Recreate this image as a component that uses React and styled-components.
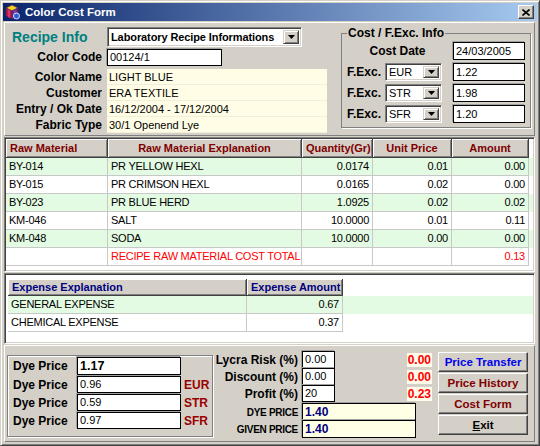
import React from 'react';
import styled, { createGlobalStyle } from 'styled-components';

const GlobalStyle = createGlobalStyle`
  html, body {
    margin: 0;
    padding: 0;
    background: #d4d0c8;
  }
  body {
    font-family: "Liberation Sans", Arial, sans-serif;
    font-size: 11px;
    color: #000;
  }
  * {
    box-sizing: border-box;
  }
`;

const Window = styled.div`
  width: 540px;
  height: 446px;
  background: #d4d0c8;
  border: 1px solid;
  border-color: #d4d0c8 #404040 #404040 #d4d0c8;
  box-shadow: inset 1px 1px #fff, inset -1px -1px #808080;
  padding: 2px;
  display: flex;
  flex-direction: column;
`;

const TitleBar = styled.div`
  height: 18px;
  flex: none;
  display: flex;
  align-items: center;
  padding: 0 3px 0 2px;
  background: linear-gradient(to right, #0a246a, #a6caf0);
`;

const TitleText = styled.span`
  flex: 1;
  margin-left: 4px;
  color: #fff;
  font-weight: bold;
  font-size: 11.5px;
`;

const CloseButton = styled.div`
  width: 16px;
  height: 14px;
  background: #d4d0c8;
  border: 1px solid;
  border-color: #fff #404040 #404040 #fff;
  box-shadow: inset -1px -1px #808080;
  display: flex;
  align-items: center;
  justify-content: center;
`;

const Body = styled.div`
  flex: 1;
  display: flex;
  flex-direction: column;
  gap: 1px;
  padding: 1px 2px 0 1px;
`;

const Panel = styled.div`
  flex: none;
  height: ${p => p.$h}px;
  background: ${p => (p.$white ? '#fff' : '#d4d0c8')};
  border: 1px solid;
  border-color: ${p => (p.$sunken ? '#808080 #fff #fff #808080' : '#fff #808080 #808080 #fff')};
  box-shadow: ${p => (p.$sunken ? 'inset 1px 1px #404040, inset -1px -1px #d4d0c8' : 'none')};
`;

const TopPanel = styled(Panel)`
  display: flex;
  align-items: flex-start;
  padding: 4px 3px 0 2px;
`;

const GridPanel = styled(Panel)`
  padding: 1px;
  overflow: hidden;
`;

const ExpensePanel = styled(Panel)`
  padding: 5px 1px 1px 3px;
`;

const BottomPanel = styled(Panel)`
  display: flex;
  align-items: flex-start;
  padding: 0 6px 0 2px;
`;

/* ---------- recipe info ---------- */

const RecipeGrid = styled.div`
  display: grid;
  grid-template-columns: 95px 220px;
  grid-template-rows: 22px 20px repeat(4, 16px);
  column-gap: 5px;
  align-items: center;
`;

const SectionTitle = styled.div`
  align-self: start;
  padding-left: 5px;
  line-height: 20px;
  font-size: 14px;
  font-weight: bold;
  color: #008080;
`;

const FieldLabel = styled.div`
  text-align: right;
  font-size: 12px;
  font-weight: bold;
  white-space: nowrap;
  align-self: ${p => (p.$top ? 'start' : 'center')};
  line-height: ${p => (p.$top ? '17px' : 'normal')};
`;

const InfoField = styled.div`
  height: 16px;
  background: #fffde6;
  border-bottom: 1px solid #f1efdc;
  padding-left: 2px;
  line-height: 16px;
  font-size: 11px;
  white-space: nowrap;
`;

const Combo = styled.div`
  width: ${p => p.$w}px;
  height: ${p => p.$h || 18}px;
  align-self: start;
  background: #fff;
  border: 1px solid;
  border-color: #808080 #fff #fff #808080;
  box-shadow: inset 1px 1px #404040, inset -1px -1px #d4d0c8;
  padding: 2px;
  display: flex;
  align-items: center;
`;

const ComboText = styled.span`
  flex: 1;
  padding-left: 1px;
  font-size: ${p => p.$size || 11}px;
  font-weight: ${p => (p.$bold ? 'bold' : 'normal')};
  letter-spacing: ${p => (p.$bold ? '-0.1px' : 'normal')};
  white-space: nowrap;
  overflow: hidden;
`;

const ComboArrow = styled.div`
  width: 16px;
  flex: none;
  align-self: stretch;
  background: #d4d0c8;
  border: 1px solid;
  border-color: #d4d0c8 #404040 #404040 #d4d0c8;
  box-shadow: inset 1px 1px #fff, inset -1px -1px #808080;
  display: flex;
  align-items: center;
  justify-content: center;
`;

const TextBox = styled.div`
  width: ${p => p.$w}px;
  height: ${p => p.$h || 18}px;
  align-self: start;
  justify-self: ${p => (p.$end ? 'end' : 'start')};
  margin-top: ${p => p.$mt || 0}px;
  background: ${p => p.$bg || '#fff'};
  border: 1px solid #000;
  box-shadow: -1px -1px 0 #a0a0a0;
  padding-left: 2px;
  line-height: ${p => (p.$h || 18) - 2}px;
  font-size: ${p => p.$size || 11}px;
  font-weight: ${p => (p.$bold ? 'bold' : 'normal')};
  color: ${p => p.$color || '#000'};
  white-space: nowrap;
`;

/* ---------- exchange group ---------- */

const GroupBox = styled.fieldset`
  margin: 0 0 0 auto;
  width: 190px;
  height: 101px;
  min-width: 0;
  padding: 0 5px;
  border: 1px solid #808080;
  box-shadow: 1px 1px 0 #fff;
`;

const GroupLegend = styled.legend`
  padding: 0 1px;
  font-size: 12px;
  font-weight: bold;
  line-height: 12px;
`;

const ExcGrid = styled.div`
  display: grid;
  grid-template-columns: 38px 57px 1fr;
  grid-auto-rows: 18px;
  row-gap: 3px;
  align-items: center;
  margin-top: 3px;
`;

const ExcLabel = styled.div`
  grid-column: ${p => p.$span || 'auto'};
  text-align: ${p => (p.$center ? 'center' : 'left')};
  font-size: 12px;
  font-weight: bold;
  white-space: nowrap;
  padding-left: ${p => (p.$center ? '6px' : '0')};
`;

/* ---------- grids ---------- */

const GridRow = styled.div`
  display: grid;
  grid-template-columns: ${p => p.$cols};
  height: ${p => p.$h || 18}px;
  background: ${p => p.$bg || '#fff'};
`;

const HeadCell = styled.div`
  background: #d4d0c8;
  border-right: 1px solid #404040;
  border-bottom: 1px solid #404040;
  box-shadow: inset 1px 1px #fff, inset -1px -1px #808080;
  color: ${p => p.$color};
  font-size: 11px;
  font-weight: bold;
  text-align: ${p => p.$align || 'center'};
  padding: 0 4px;
  line-height: ${p => p.$lh || 17}px;
  white-space: nowrap;
  overflow: hidden;
`;

const Cell = styled.div`
  border-right: 1px solid #c8c8c8;
  border-bottom: 1px solid #c8c8c8;
  padding: 0 3px;
  line-height: 17px;
  letter-spacing: -0.25px;
  text-align: ${p => p.$align || 'left'};
  color: ${p => p.$color || '#000'};
  white-space: nowrap;
  overflow: hidden;
`;

/* ---------- bottom ---------- */

const PriceGroup = styled.div`
  width: 206px;
  height: 82px;
  margin-top: 9px;
  border: 1px solid #808080;
  box-shadow: inset 1px 1px #fff, 1px 1px 0 #fff;
  padding: 1px 0 0 5px;
  display: grid;
  grid-template-columns: 64px 104px auto;
  grid-template-rows: 18px 17px 17px 17px;
  row-gap: 1px;
  align-items: center;
`;

const PriceLabel = styled.div`
  font-size: 12px;
  font-weight: bold;
  white-space: nowrap;
`;

const Currency = styled.div`
  margin-left: 3px;
  color: #990000;
  font-size: 12px;
  font-weight: bold;
`;

const MiddleBlock = styled.div`
  width: 221px;
  margin: 5px 0 0 2px;
`;

const RateGrid = styled.div`
  display: grid;
  grid-template-columns: 83px 33px 1fr;
  grid-auto-rows: 17px;
  column-gap: 4px;
  align-items: center;
`;

const RedValue = styled.div`
  justify-self: end;
  margin-right: 4px;
  padding: 0 1px;
  background: #fffbea;
  color: #ff0000;
  font-size: 12px;
  font-weight: bold;
  line-height: 14px;
`;

const TotalsGrid = styled.div`
  display: grid;
  grid-template-columns: 83px 114px;
  grid-template-rows: 18px 17px;
  column-gap: 4px;
  align-items: center;
  margin-top: 1px;
`;

const SmallCaps = styled.div`
  text-align: right;
  font-size: 10px;
  font-weight: bold;
  letter-spacing: -0.3px;
  white-space: nowrap;
`;

const ButtonColumn = styled.div`
  display: flex;
  flex-direction: column;
  gap: 1px;
  margin: 6px 0 0 2px;
`;

const ActionButton = styled.button`
  width: 90px;
  height: 20px;
  padding: 0;
  background: #d4d0c8;
  border: 1px solid;
  border-color: #fff #404040 #404040 #fff;
  box-shadow: inset -1px -1px #808080;
  font-family: "Liberation Sans", Arial, sans-serif;
  font-size: 11.5px;
  font-weight: bold;
  color: ${p => p.$color || '#000'};
`;

/* ---------- icons ---------- */

const AppIcon = () => (
  <svg width="16" height="16" viewBox="0 0 16 16">
    <polygon points="1,4 7,1 13,4 7,7" fill="#f2d21a" stroke="#502060" strokeWidth="0.6" />
    <polygon points="1,4 7,7 7,15 1,12" fill="#c01848" stroke="#502060" strokeWidth="0.6" />
    <polygon points="7,7 13,4 13,12 7,15" fill="#6a2c90" stroke="#502060" strokeWidth="0.6" />
    <line x1="4" y1="5.5" x2="4" y2="13.5" stroke="#f090b0" strokeWidth="0.6" />
    <line x1="10" y1="5.5" x2="10" y2="13.5" stroke="#a070c0" strokeWidth="0.6" />
    <circle cx="11.5" cy="12" r="3" fill="#2c5ce0" stroke="#fff" strokeWidth="0.8" />
  </svg>
);

const CloseIcon = () => (
  <svg width="8" height="7" viewBox="0 0 8 7">
    <path d="M0.5 0.5 L7.5 6.5 M7.5 0.5 L0.5 6.5" stroke="#000" strokeWidth="1.6" />
  </svg>
);

const ArrowIcon = () => (
  <svg width="7" height="4" viewBox="0 0 7 4">
    <polygon points="0,0 7,0 3.5,4" fill="#000" />
  </svg>
);

const Dropdown = ({ w, h, text, bold, size }) => (
  <Combo $w={w} $h={h}>
    <ComboText $bold={bold} $size={size}>{text}</ComboText>
    <ComboArrow><ArrowIcon /></ComboArrow>
  </Combo>
);

/* ---------- data ---------- */

const recipeInfo = [
  ['Color Name', 'LIGHT BLUE'],
  ['Customer', 'ERA TEXTILE'],
  ['Entry / Ok Date', '16/12/2004 - 17/12/2004'],
  ['Fabric Type', '30/1 Openend Lye'],
];

const rates = [
  ['EUR', '1.22'],
  ['STR', '1.98'],
  ['SFR', '1.20'],
];

const materialCols = '102px 194px 71px 79px 77px';
const materials = [
  ['BY-014', 'PR YELLOW HEXL', '0.0174', '0.01', '0.00'],
  ['BY-015', 'PR CRIMSON HEXL', '0.0165', '0.02', '0.00'],
  ['BY-023', 'PR BLUE HERD', '1.0925', '0.02', '0.02'],
  ['KM-046', 'SALT', '10.0000', '0.01', '0.11'],
  ['KM-048', 'SODA', '10.0000', '0.00', '0.00'],
];

const expenseCols = '239px 96px';
const expenses = [
  ['GENERAL EXPENSE', '0.67'],
  ['CHEMICAL EXPENSE', '0.37'],
];

const dyePrices = [
  ['1.17', null],
  ['0.96', 'EUR'],
  ['0.59', 'STR'],
  ['0.97', 'SFR'],
];

const adjustments = [
  ['Lycra Risk (%)', '0.00', '0.00'],
  ['Discount (%)', '0.00', '0.00'],
  ['Profit (%)', '20', '0.23'],
];

const GREEN = '#e3fbe3';

function App() {
  return (
    <>
      <GlobalStyle />
      <Window>
        <TitleBar>
          <AppIcon />
          <TitleText>Color Cost Form</TitleText>
          <CloseButton><CloseIcon /></CloseButton>
        </TitleBar>

        <Body>
          <TopPanel $h={114}>
            <RecipeGrid>
              <SectionTitle>Recipe Info</SectionTitle>
              <Dropdown w={195} h={20} text="Laboratory Recipe Informations" bold size={11} />
              <FieldLabel $top>Color Code</FieldLabel>
              <TextBox $w={115} $h={17}>00124/1</TextBox>
              {recipeInfo.map(([label, value]) => (
                <React.Fragment key={label}>
                  <FieldLabel>{label}</FieldLabel>
                  <InfoField>{value}</InfoField>
                </React.Fragment>
              ))}
            </RecipeGrid>

            <GroupBox>
              <GroupLegend>Cost / F.Exc. Info</GroupLegend>
              <ExcGrid>
                <ExcLabel $span="1 / 3" $center>Cost Date</ExcLabel>
                <TextBox $w={72} $end>24/03/2005</TextBox>
                {rates.map(([cur, rate]) => (
                  <React.Fragment key={cur}>
                    <ExcLabel>F.Exc.</ExcLabel>
                    <Dropdown w={57} text={cur} />
                    <TextBox $w={72} $end>{rate}</TextBox>
                  </React.Fragment>
                ))}
              </ExcGrid>
            </GroupBox>
          </TopPanel>

          <GridPanel $h={135} $sunken $white>
            <GridRow $cols={materialCols} $h={19}>
              <HeadCell $color="#800000" $align="left" $lh={18}>Raw Material</HeadCell>
              <HeadCell $color="#800000" $lh={18}>Raw Material Explanation</HeadCell>
              <HeadCell $color="#800000" $lh={18}>Quantity(Gr)</HeadCell>
              <HeadCell $color="#800000" $lh={18}>Unit Price</HeadCell>
              <HeadCell $color="#800000" $lh={18}>Amount</HeadCell>
            </GridRow>
            {materials.map((row, i) => (
              <GridRow key={row[0]} $cols={materialCols} $bg={i % 2 === 0 ? GREEN : '#fff'}>
                <Cell>{row[0]}</Cell>
                <Cell>{row[1]}</Cell>
                <Cell $align="right">{row[2]}</Cell>
                <Cell $align="right">{row[3]}</Cell>
                <Cell $align="right">{row[4]}</Cell>
              </GridRow>
            ))}
            <GridRow $cols={materialCols}>
              <Cell />
              <Cell $color="#ff0000">RECIPE RAW MATERIAL COST TOTAL</Cell>
              <Cell />
              <Cell />
              <Cell $align="right" $color="#ff0000">0.13</Cell>
            </GridRow>
          </GridPanel>

          <ExpensePanel $h={71} $sunken $white>
            <GridRow $cols={expenseCols} $h={17}>
              <HeadCell $color="#000080" $align="left" $lh={16}>Expense Explanation</HeadCell>
              <HeadCell $color="#000080" $lh={16}>Expense Amount</HeadCell>
            </GridRow>
            {expenses.map(([name, amount], i) => (
              <GridRow key={name} $cols={expenseCols} $bg={i === 0 ? GREEN : '#fff'}>
                <Cell>{name}</Cell>
                <Cell $align="right">{amount}</Cell>
              </GridRow>
            ))}
          </ExpensePanel>

          <BottomPanel $h={97}>
            <PriceGroup>
              {dyePrices.map(([value, cur], i) => (
                <React.Fragment key={value}>
                  <PriceLabel>Dye Price</PriceLabel>
                  <TextBox $w={104} $h={i === 0 ? 18 : 17} $bold={i === 0} $size={i === 0 ? 12.5 : 11}>
                    {value}
                  </TextBox>
                  <Currency>{cur}</Currency>
                </React.Fragment>
              ))}
            </PriceGroup>

            <MiddleBlock>
              <RateGrid>
                {adjustments.map(([label, value, result]) => (
                  <React.Fragment key={label}>
                    <FieldLabel>{label}</FieldLabel>
                    <TextBox $w={33} $h={17}>{value}</TextBox>
                    <RedValue>{result}</RedValue>
                  </React.Fragment>
                ))}
              </RateGrid>
              <TotalsGrid>
                <SmallCaps>DYE PRICE</SmallCaps>
                <TextBox $w={114} $h={18} $bg="#ffffe6" $bold $size={12} $color="#000080">1.40</TextBox>
                <SmallCaps>GIVEN PRICE</SmallCaps>
                <TextBox $w={114} $h={18} $mt={-1} $bg="#ffffe6" $bold $size={12} $color="#000080">1.40</TextBox>
              </TotalsGrid>
            </MiddleBlock>

            <ButtonColumn>
              <ActionButton $color="#0000ee">Price Transfer</ActionButton>
              <ActionButton $color="#800000">Price History</ActionButton>
              <ActionButton $color="#800000">Cost Form</ActionButton>
              <ActionButton><u>E</u>xit</ActionButton>
            </ButtonColumn>
          </BottomPanel>
        </Body>
      </Window>
    </>
  );
}

export default App;
